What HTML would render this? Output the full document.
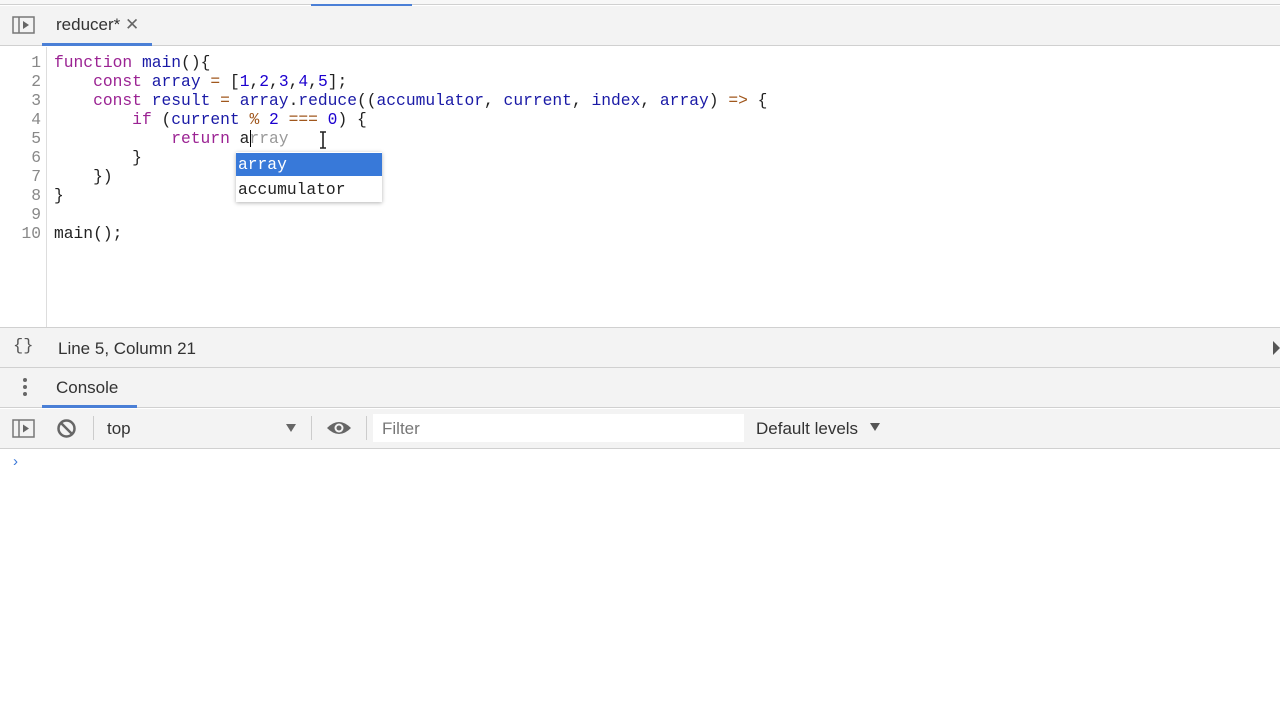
<!DOCTYPE html>
<html><head><meta charset="utf-8"><style>
*{margin:0;padding:0;box-sizing:border-box}
body{width:1280px;height:720px;background:#fff;position:relative;overflow:hidden;font-family:"Liberation Sans",sans-serif;color:#333}
.abs{position:absolute}
.code{font-family:"Liberation Mono",monospace;font-size:16.3px;line-height:19px;height:19px;white-space:pre;left:54px;color:#222}
.ln{font-family:"Liberation Mono",monospace;font-size:16.3px;line-height:19px;height:19px;width:41px;text-align:right;left:0;color:#888}
.k{color:#9b2393}.v{color:#1a1aa6}.n{color:#1c00cf}.o{color:#a0571d}
.ui{font-size:17px}
</style></head><body>
<div class="abs" style="left:0;top:0;width:1280px;height:5px;background:#f7f7f7;border-bottom:1px solid #d0d0d0"></div>
<div class="abs" style="left:311px;top:4px;width:101px;height:2px;background:#4a7fd6"></div>
<div class="abs" style="left:0;top:6px;width:1280px;height:40px;background:#f3f3f3;border-bottom:1px solid #d0d0d0"></div>
<svg class="abs" style="left:12px;top:16px" width="24" height="18" viewBox="0 0 24 18"><rect x="1" y="1" width="21" height="16" fill="none" stroke="#777" stroke-width="1.5"/><line x1="7" y1="1" x2="7" y2="17" stroke="#777" stroke-width="1.5"/><path d="M11 5 L17 9 L11 13Z" fill="#666"/></svg>
<div class="abs ui" style="left:56px;top:15px;color:#333">reducer* <span style="color:#666">✕</span></div>
<div class="abs" style="left:42px;top:43px;width:110px;height:3px;background:#4a7fd6"></div>
<div class="abs" style="left:46px;top:47px;width:1px;height:280px;background:#ddd"></div>

<div class="abs ln" style="top:53px">1</div><div class="abs ln" style="top:72px">2</div><div class="abs ln" style="top:91px">3</div><div class="abs ln" style="top:110px">4</div><div class="abs ln" style="top:129px">5</div><div class="abs ln" style="top:148px">6</div><div class="abs ln" style="top:167px">7</div><div class="abs ln" style="top:186px">8</div><div class="abs ln" style="top:205px">9</div><div class="abs ln" style="top:224px">10</div>

<div class="abs code" style="top:53px"><span class="k">function</span> <span class="v">main</span>(){</div>
<div class="abs code" style="top:72px">    <span class="k">const</span> <span class="v">array</span> <span class="o">=</span> [<span class="n">1</span>,<span class="n">2</span>,<span class="n">3</span>,<span class="n">4</span>,<span class="n">5</span>];</div>
<div class="abs code" style="top:91px">    <span class="k">const</span> <span class="v">result</span> <span class="o">=</span> <span class="v">array</span>.<span class="v">reduce</span>((<span class="v">accumulator</span>, <span class="v">current</span>, <span class="v">index</span>, <span class="v">array</span>) <span class="o">=&gt;</span> {</div>
<div class="abs code" style="top:110px">        <span class="k">if</span> (<span class="v">current</span> <span class="o">%</span> <span class="n">2</span> <span class="o">===</span> <span class="n">0</span>) {</div>
<div class="abs code" style="top:129px">            <span class="k">return</span> a<span style="color:#999">rray</span></div>
<div class="abs" style="left:250px;top:130px;width:1px;height:17px;background:#000"></div>
<svg class="abs" style="left:318px;top:131px" width="10" height="18" viewBox="0 0 10 18"><path d="M2 1 H8 M5 1 V17 M2 17 H8" stroke="#222" stroke-width="1.6" fill="none"/></svg>
<div class="abs code" style="top:148px">        }</div>
<div class="abs code" style="top:167px">    })</div>
<div class="abs code" style="top:186px">}</div>
<div class="abs code" style="top:224px">main();</div>

<div class="abs" style="left:236px;top:152px;width:146px;height:50px;background:#fff;box-shadow:0 1px 4px rgba(0,0,0,.3)"></div>
<div class="abs" style="left:236px;top:153px;width:146px;height:23px;background:#3879d9"></div>
<div class="abs code" style="left:238px;top:155px;color:#fff">array</div>
<div class="abs code" style="left:238px;top:180px">accumulator</div>

<div class="abs" style="left:0;top:327px;width:1280px;height:41px;background:#f3f3f3;border-top:1px solid #d0d0d0;border-bottom:1px solid #d0d0d0"></div>
<div class="abs" style="left:13px;top:337px;font-size:17px;color:#555;font-family:'Liberation Mono',monospace">{}</div>
<div class="abs ui" style="left:58px;top:339px;color:#333">Line 5, Column 21</div>
<div class="abs" style="left:1273px;top:341px;width:0;height:0;border-top:7px solid transparent;border-bottom:7px solid transparent;border-left:7px solid #555"></div>

<div class="abs" style="left:0;top:368px;width:1280px;height:40px;background:#f3f3f3;border-bottom:1px solid #d0d0d0"></div>
<div class="abs" style="left:23px;top:378px;width:4px;height:4px;border-radius:2px;background:#666;box-shadow:0 7px 0 #666,0 14px 0 #666"></div>
<div class="abs ui" style="left:56px;top:378px;color:#333">Console</div>
<div class="abs" style="left:42px;top:405px;width:95px;height:3px;background:#4a7fd6"></div>

<div class="abs" style="left:0;top:409px;width:1280px;height:40px;background:#f3f3f3;border-bottom:1px solid #d0d0d0"></div>
<svg class="abs" style="left:12px;top:419px" width="24" height="19" viewBox="0 0 24 19"><rect x="1" y="1" width="21" height="17" fill="none" stroke="#777" stroke-width="1.5"/><line x1="7" y1="1" x2="7" y2="18" stroke="#777" stroke-width="1.5"/><path d="M11 5.5 L17 9.5 L11 13.5Z" fill="#666"/></svg>
<svg class="abs" style="left:56px;top:418px" width="21" height="21" viewBox="0 0 21 21"><circle cx="10.5" cy="10.5" r="8" fill="none" stroke="#666" stroke-width="2.5"/><line x1="5" y1="5" x2="16" y2="16" stroke="#666" stroke-width="2.5"/></svg>
<div class="abs" style="left:93px;top:416px;width:1px;height:24px;background:#ccc"></div>
<div class="abs ui" style="left:107px;top:419px;color:#333">top</div>
<div class="abs" style="left:286px;top:424px;width:0;height:0;border-left:5px solid transparent;border-right:5px solid transparent;border-top:8px solid #666"></div>
<div class="abs" style="left:311px;top:416px;width:1px;height:24px;background:#ccc"></div>
<svg class="abs" style="left:326px;top:419px" width="26" height="18" viewBox="0 0 26 18"><path d="M1 9 Q13 -3 25 9 Q13 21 1 9Z" fill="#666"/><circle cx="13" cy="9" r="4.5" fill="#f3f3f3"/><circle cx="13" cy="9" r="2.5" fill="#666"/></svg>
<div class="abs" style="left:366px;top:416px;width:1px;height:24px;background:#ccc"></div>
<div class="abs" style="left:373px;top:414px;width:371px;height:28px;background:#fff"></div>
<div class="abs ui" style="left:382px;top:419px;color:#777">Filter</div>
<div class="abs ui" style="left:756px;top:419px;color:#333">Default levels</div>
<div class="abs" style="left:870px;top:423px;width:0;height:0;border-left:5px solid transparent;border-right:5px solid transparent;border-top:8px solid #555"></div>

<div class="abs" style="left:13px;top:453px;font-size:15px;color:#3b78d8">›</div>
</body></html>
